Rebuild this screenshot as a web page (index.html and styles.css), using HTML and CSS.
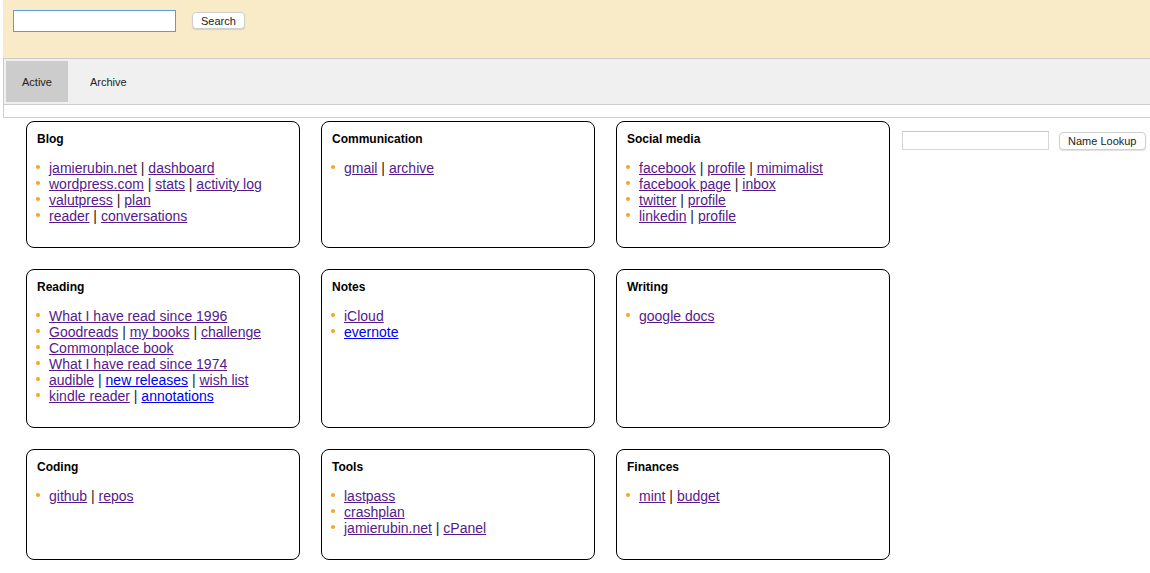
FILE: index.html
```html
<!DOCTYPE html>
<html lang="en">

<head>
    <meta charset="UTF-8">
    <title>Start page</title>
    <link rel="stylesheet" href="styles.css">
</head>

<body>
    <!--顶部搜索-->
    <div class="top">
        <input type="text" class="search-box">
        <button class="btn">Search</button>
    </div>

    <!--标签页-->
    <div class="tabs">
        <ul class="tab-nav">
            <li class="current">Active</li>
            <li>Archive</li>
        </ul>
        <div class="tab-panel"></div>
    </div>

    <div class="main">
        <div class="cards">
            <div class="card">
                <h3>Blog</h3>
                <ul>
                    <li><a href="#" class="seen">jamierubin.net</a> | <a href="#" class="seen">dashboard</a></li>
                    <li><a href="#" class="seen">wordpress.com</a> | <a href="#" class="seen">stats</a> | <a href="#" class="seen">activity log</a></li>
                    <li><a href="#" class="seen">valutpress</a> | <a href="#" class="seen">plan</a></li>
                    <li><a href="#" class="seen">reader</a> | <a href="#" class="seen">conversations</a></li>
                </ul>
            </div>
            <div class="card">
                <h3>Communication</h3>
                <ul>
                    <li><a href="#" class="seen">gmail</a> | <a href="#" class="seen">archive</a></li>
                </ul>
            </div>
            <div class="card">
                <h3>Social media</h3>
                <ul>
                    <li><a href="#" class="seen">facebook</a> | <a href="#" class="seen">profile</a> | <a href="#" class="seen">mimimalist</a></li>
                    <li><a href="#" class="seen">facebook page</a> | <a href="#" class="seen">inbox</a></li>
                    <li><a href="#" class="seen">twitter</a> | <a href="#" class="seen">profile</a></li>
                    <li><a href="#" class="seen">linkedin</a> | <a href="#" class="seen">profile</a></li>
                </ul>
            </div>

            <div class="card">
                <h3>Reading</h3>
                <ul>
                    <li><a href="#" class="seen">What I have read since 1996</a></li>
                    <li><a href="#" class="seen">Goodreads</a> | <a href="#" class="seen">my books</a> | <a href="#" class="seen">challenge</a></li>
                    <li><a href="#" class="seen">Commonplace book</a></li>
                    <li><a href="#" class="seen">What I have read since 1974</a></li>
                    <li><a href="#" class="seen">audible</a> | <a href="#">new releases</a> | <a href="#" class="seen">wish list</a></li>
                    <li><a href="#" class="seen">kindle reader</a> | <a href="#">annotations</a></li>
                </ul>
            </div>
            <div class="card">
                <h3>Notes</h3>
                <ul>
                    <li><a href="#" class="seen">iCloud</a></li>
                    <li><a href="#">evernote</a></li>
                </ul>
            </div>
            <div class="card">
                <h3>Writing</h3>
                <ul>
                    <li><a href="#" class="seen">google docs</a></li>
                </ul>
            </div>

            <div class="card">
                <h3>Coding</h3>
                <ul>
                    <li><a href="#" class="seen">github</a> | <a href="#" class="seen">repos</a></li>
                </ul>
            </div>
            <div class="card">
                <h3>Tools</h3>
                <ul>
                    <li><a href="#" class="seen">lastpass</a></li>
                    <li><a href="#" class="seen">crashplan</a></li>
                    <li><a href="#" class="seen">jamierubin.net</a> | <a href="#" class="seen">cPanel</a></li>
                </ul>
            </div>
            <div class="card">
                <h3>Finances</h3>
                <ul>
                    <li><a href="#" class="seen">mint</a> | <a href="#" class="seen">budget</a></li>
                </ul>
            </div>
        </div>

        <!--右侧查找-->
        <div class="side">
            <input type="text" class="lookup-box">
            <button class="btn">Name Lookup</button>
        </div>
    </div>
</body>

</html>
```

FILE: styles.css
```css
* {
    margin: 0;
    padding: 0;
    box-sizing: border-box;
}

body {
    margin-left: 3px;
    font-family: "Liberation Sans", Arial, sans-serif;
    color: #222;
    background: #fff;
}

.top {
    height: 58px;
    padding: 10px 10px 0;
    background: #faebc8;
    display: flex;
    align-items: flex-start;
}

.search-box {
    width: 163px;
    height: 22px;
    border: 1px solid #5b9be6;
    outline: none;
    background: #fff;
}

.btn {
    height: 17px;
    padding: 0 8px;
    font-family: "Liberation Sans", Arial, sans-serif;
    font-size: 11px;
    color: #222;
    background: #fff;
    border: 1px solid #cfcfcf;
    border-radius: 4px;
    box-shadow: 0 1px 1px rgba(0, 0, 0, 0.12);
}

.top .btn {
    margin: 2px 0 0 16px;
}

.tabs {
    border-left: 1px solid #ccc;
}

.tab-nav {
    display: flex;
    gap: 6px;
    list-style: none;
    padding: 2px;
    background: #f0f0f0;
    border-top: 1px solid #ccc;
    border-bottom: 1px solid #ccc;
}

.tab-nav li {
    height: 41px;
    line-height: 43px;
    padding: 0 16px;
    font-size: 11px;
    color: #222;
    cursor: pointer;
}

.tab-nav .current {
    background: #ccc;
}

.tab-panel {
    height: 13px;
    border-bottom: 1px solid #ccc;
}

.main {
    display: flex;
    align-items: flex-start;
    padding: 3px 0 0 23px;
}

.cards {
    display: grid;
    grid-template-columns: repeat(3, 274px);
    gap: 21px;
}

.card {
    border: 1px solid #000;
    border-radius: 8px;
    padding: 10px 10px 9px;
}

.card h3 {
    font-size: 12px;
    line-height: 14px;
    font-weight: bold;
    color: #000;
}

.card ul {
    list-style: none;
    margin: 14px 0;
}

.card li {
    font-size: 14px;
    line-height: 16px;
    color: #222;
    white-space: nowrap;
}

/* 橙色小圆点 */
.card li::before {
    content: "";
    display: inline-block;
    width: 4px;
    height: 4px;
    border-radius: 50%;
    background: #f7a51f;
    margin: 0 9px 0 -1px;
    vertical-align: 4px;
}

.card a {
    color: #0000ee;
}

.card a.seen {
    color: #551a8b;
}

.side {
    display: flex;
    align-items: center;
    margin-left: 12px;
    padding-top: 10px;
}

.lookup-box {
    width: 147px;
    height: 19px;
    border: 1px solid #d6d6d6;
    border-top-color: #c4c4c4;
    outline: none;
    background: #fff;
}

.side .btn {
    height: 18px;
    margin-left: 10px;
}
```
